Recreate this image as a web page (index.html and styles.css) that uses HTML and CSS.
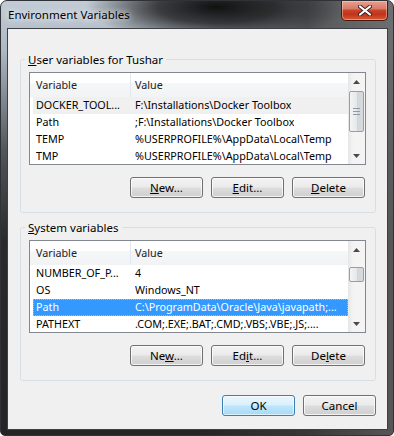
FILE: index.html
```html
<!DOCTYPE html>
<html lang="en">
  <head>
    <meta charset="UTF-8" />
    <title>Environment Variables</title>
    <link rel="stylesheet" href="styles.css">
  </head>
  <body>
    <div class="window">
      <div class="titlebar">
        <span class="title">Environment Variables</span>
        <button type="button" class="close-btn" aria-label="Close">
          <svg width="14" height="11" viewBox="0 0 14 11">
            <path d="M2 1.5 L12 9.5 M12 1.5 L2 9.5" stroke="#3b2222" stroke-width="4" stroke-linecap="round" fill="none" />
            <path d="M2 1.5 L12 9.5 M12 1.5 L2 9.5" stroke="#ffffff" stroke-width="2.2" stroke-linecap="round" fill="none" />
          </svg>
        </button>
      </div>

      <div class="client">
        <fieldset class="group group-user">
          <legend><u>U</u>ser variables for Tushar</legend>
          <div class="list">
            <div class="list-body">
              <div class="list-header">
                <span class="hcol hcol-var">Variable</span>
                <span class="hcol hcol-val">Value</span>
              </div>
              <div class="row row-focus"><span class="cell-var">DOCKER_TOOL...</span><span class="cell-val">F:\Installations\Docker Toolbox</span></div>
              <div class="row"><span class="cell-var">Path</span><span class="cell-val">;F:\Installations\Docker Toolbox</span></div>
              <div class="row"><span class="cell-var">TEMP</span><span class="cell-val">%USERPROFILE%\AppData\Local\Temp</span></div>
              <div class="row"><span class="cell-var">TMP</span><span class="cell-val">%USERPROFILE%\AppData\Local\Temp</span></div>
            </div>
            <div class="scrollbar">
              <div class="arrow">
                <svg width="7" height="4" viewBox="0 0 7 4"><polygon points="3.5,0 7,4 0,4" fill="#4a4a4a" /></svg>
              </div>
              <div class="track">
                <div class="thumb thumb-user">
                  <svg width="7" height="7" viewBox="0 0 7 7">
                    <rect x="0" y="0" width="7" height="1" fill="#8f9aa6" />
                    <rect x="0" y="3" width="7" height="1" fill="#8f9aa6" />
                    <rect x="0" y="6" width="7" height="1" fill="#8f9aa6" />
                  </svg>
                </div>
              </div>
              <div class="arrow">
                <svg width="7" height="4" viewBox="0 0 7 4"><polygon points="0,0 7,0 3.5,4" fill="#4a4a4a" /></svg>
              </div>
            </div>
          </div>
          <div class="buttons">
            <button type="button" class="btn"><u>N</u>ew...</button>
            <button type="button" class="btn"><u>E</u>dit...</button>
            <button type="button" class="btn"><u>D</u>elete</button>
          </div>
        </fieldset>

        <fieldset class="group group-system">
          <legend><u>S</u>ystem variables</legend>
          <div class="list">
            <div class="list-body">
              <div class="list-header">
                <span class="hcol hcol-var">Variable</span>
                <span class="hcol hcol-val">Value</span>
              </div>
              <div class="row"><span class="cell-var">NUMBER_OF_P...</span><span class="cell-val">4</span></div>
              <div class="row"><span class="cell-var">OS</span><span class="cell-val">Windows_NT</span></div>
              <div class="row row-selected"><span class="cell-var">Path</span><span class="cell-val">C:\ProgramData\Oracle\Java\javapath;...</span></div>
              <div class="row"><span class="cell-var">PATHEXT</span><span class="cell-val">.COM;.EXE;.BAT;.CMD;.VBS;.VBE;.JS;....</span></div>
            </div>
            <div class="scrollbar">
              <div class="arrow">
                <svg width="7" height="4" viewBox="0 0 7 4"><polygon points="3.5,0 7,4 0,4" fill="#4a4a4a" /></svg>
              </div>
              <div class="track">
                <div class="thumb thumb-system"></div>
              </div>
              <div class="arrow">
                <svg width="7" height="4" viewBox="0 0 7 4"><polygon points="0,0 7,0 3.5,4" fill="#4a4a4a" /></svg>
              </div>
            </div>
          </div>
          <div class="buttons">
            <button type="button" class="btn">Ne<u>w</u>...</button>
            <button type="button" class="btn">Ed<u>i</u>t...</button>
            <button type="button" class="btn">De<u>l</u>ete</button>
          </div>
        </fieldset>

        <div class="dialog-buttons">
          <button type="button" class="btn btn-default">OK</button>
          <button type="button" class="btn">Cancel</button>
        </div>
      </div>
    </div>
  </body>
</html>
```

FILE: styles.css
```css
body {
  margin: 0;
  padding: 0;
  font-family: "Noto Sans", sans-serif;
  font-size: 11.5px;
  color: #000;
  background: #fff;
}

.window {
  width: 394px;
  height: 436px;
  box-sizing: border-box;
  border: 1px solid #2f3338;
  border-radius: 7px 7px 5px 5px;
  padding: 0 5px 5px 6px;
  display: flex;
  flex-direction: column;
  background:
    radial-gradient(ellipse 130px 36px at 215px 6px, rgba(8, 8, 8, 0.95) 0%, rgba(25, 25, 25, 0.8) 45%, rgba(40, 40, 40, 0) 100%),
    linear-gradient(to right, rgba(80, 80, 80, 0) 50%, rgba(60, 60, 60, 0.8) 78%, rgba(95, 95, 95, 0.85) 100%),
    linear-gradient(to bottom, #c2ccd6 0px, #aeb8c2 50px, #50555a 150px, #2a2a2a 240px, #242424 100%);
}

.titlebar {
  height: 27px;
  display: flex;
  align-items: flex-start;
}

.title {
  margin-top: 6px;
  margin-left: 1px;
  line-height: 16px;
  text-shadow: 0 0 6px rgba(255, 255, 255, 0.9), 0 0 10px rgba(255, 255, 255, 0.7);
}

.close-btn {
  margin-left: auto;
  width: 47px;
  height: 20px;
  padding: 0;
  border: 1px solid #4a1a12;
  border-top: none;
  border-radius: 0 0 5px 5px;
  display: flex;
  align-items: center;
  justify-content: center;
  background: linear-gradient(to bottom, #e8a090 0%, #d97b68 40%, #c7432b 50%, #c0341a 70%, #da5a34 100%);
  box-shadow: inset 0 0 0 1px rgba(255, 220, 210, 0.45);
}

.client {
  flex: 1;
  border: 1px solid #3c3f43;
  background-color: #f0f0f0;
  padding: 0 11px 0 12px;
  display: flex;
  flex-direction: column;
}

.group {
  margin: 0;
  padding: 5px 9px 14px 8px;
  border: 1px solid #d5dfe5;
  border-radius: 3px;
  min-width: 0;
}

.group legend {
  padding: 0 3px;
  margin-left: -4px;
  line-height: 15px;
}

.group-user {
  margin-top: 23px;
}

.group-system {
  margin-top: 7px;
}

.list {
  height: 93px;
  box-sizing: border-box;
  border: 1px solid #828790;
  background-color: #fff;
  display: flex;
  font-size: 10.75px;
}

.list-body {
  flex: 1;
  min-width: 0;
  overflow: hidden;
}

.list-header {
  height: 24px;
  display: flex;
  background: linear-gradient(to bottom, #ffffff 0%, #ffffff 40%, #f4f6f8 44%, #f1f3f5 100%);
  color: #222;
}

.hcol {
  line-height: 24px;
}

.hcol-var {
  width: 94px;
  padding-left: 6px;
  border-right: 1px solid #e3e8ee;
}

.hcol-val {
  padding-left: 4px;
}

.row {
  height: 17px;
  line-height: 17px;
  margin-left: 3px;
  padding-left: 3px;
  display: flex;
  white-space: nowrap;
  box-sizing: border-box;
}

.cell-var {
  width: 99px;
  flex-shrink: 0;
}

.cell-val {
  overflow: hidden;
}

.row-focus {
  background-color: #f0f0f0;
}

.row-selected {
  background-color: #3399ff;
  color: #fff;
  outline: 1px dotted #f2b04a;
  outline-offset: -1px;
}

.scrollbar {
  width: 17px;
  display: flex;
  flex-direction: column;
  background: linear-gradient(to right, #e6e6e6 0%, #f4f4f4 30%, #f4f4f4 100%);
}

.arrow {
  height: 17px;
  display: flex;
  align-items: center;
  justify-content: center;
}

.track {
  flex: 1;
  padding-top: 1px;
}

.thumb {
  margin: 0 1px;
  box-sizing: border-box;
  border: 1px solid #979ea6;
  border-radius: 2px;
  background: linear-gradient(to right, #f3f4f5 0%, #e6e8ea 50%, #d3d6d9 51%, #d8dbde 100%);
  display: flex;
  align-items: center;
  justify-content: center;
}

.thumb-user {
  height: 41px;
}

.thumb-system {
  margin-top: 8px;
  height: 15px;
}

.buttons {
  margin-top: 12px;
  display: flex;
  justify-content: flex-end;
  gap: 8px;
  padding-right: 1px;
}

.btn {
  width: 73px;
  height: 21px;
  padding: 0;
  font-family: inherit;
  font-size: 11.5px;
  color: #000;
  border: 1px solid #707070;
  border-radius: 3px;
  background: linear-gradient(to bottom, #f2f2f2 0%, #ebebeb 48%, #dddddd 52%, #cfcfcf 100%);
  box-shadow: inset 0 0 0 1px rgba(255, 255, 255, 0.75);
}

.btn-default {
  border-color: #3c7fb1;
  background: linear-gradient(to bottom, #eaf6fd 0%, #d9f0fc 48%, #bee6fd 52%, #a7d9f5 100%);
  box-shadow: inset 0 0 0 1px rgba(255, 255, 255, 0.6);
}

.dialog-buttons {
  margin-top: 14px;
  display: flex;
  justify-content: flex-end;
  gap: 8px;
}
```
